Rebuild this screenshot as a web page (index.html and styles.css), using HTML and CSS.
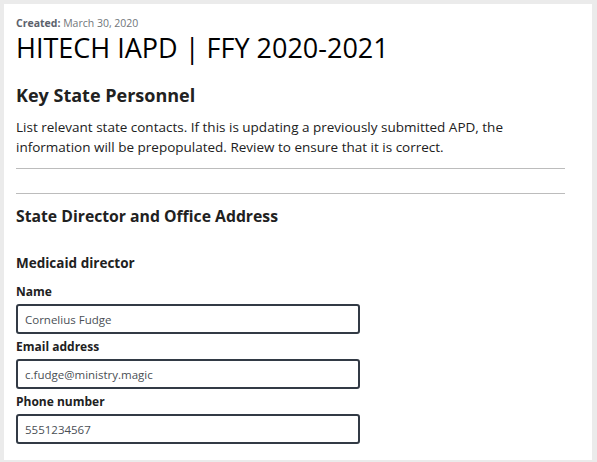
FILE: index.html
```html
<!DOCTYPE html>
<html lang="en">
<head>
<meta charset="utf-8">
<title>HITECH IAPD</title>
<link rel="stylesheet" href="styles.css">
</head>
<body>
<main class="card">
  <div class="created"><strong>Created:</strong> March 30, 2020</div>
  <h1 class="title">HITECH IAPD | FFY 2020-2021</h1>
  <h2 class="section-title">Key State Personnel</h2>
  <p class="intro">List relevant state contacts. If this is updating a previously submitted APD, the information will be prepopulated. Review to ensure that it is correct.</p>
  <hr class="rule">
  <hr class="rule rule-second">
  <h3 class="subsection-title">State Director and Office Address</h3>
  <h4 class="group-title">Medicaid director</h4>
  <div class="field">
    <label class="field-label" for="name">Name</label>
    <input class="field-input" id="name" type="text" value="Cornelius Fudge">
  </div>
  <div class="field">
    <label class="field-label" for="email">Email address</label>
    <input class="field-input" id="email" type="text" value="c.fudge@ministry.magic">
  </div>
  <div class="field">
    <label class="field-label" for="phone">Phone number</label>
    <input class="field-input" id="phone" type="text" value="5551234567">
  </div>
</main>
</body>
</html>
```

FILE: styles.css
```css
* { box-sizing: border-box; }
html, body { margin: 0; padding: 0; }
body {
  background: #ebebeb;
  font-family: "Open Sans", "Liberation Sans", sans-serif;
  color: #212121;
  padding: 4px 5px 3px 4px;
}
.card {
  background: #ffffff;
  padding: 12px 27px 16px 12px;
  min-height: 455px;
}
.created {
  font-size: 10.5px;
  line-height: 15px;
  color: #71767a;
}
.created strong { font-weight: 700; color: #5b616b; }
.title {
  margin: 0;
  font-size: 27px;
  font-weight: 400;
  line-height: 34px;
  color: #000;
}
.section-title {
  margin: 18px 0 0;
  font-size: 18px;
  font-weight: 700;
  line-height: 24px;
}
.intro {
  margin: 11px 0 0;
  font-size: 13.5px;
  line-height: 19.5px;
}
.rule {
  border: 0;
  border-top: 1px solid #bcbcbc;
  margin: 11px 0 0;
}
.rule-second { margin-top: 24px; }
.subsection-title {
  margin: 11px 0 0;
  font-size: 15.75px;
  font-weight: 700;
  line-height: 22px;
}
.group-title {
  margin: 26px 0 11px;
  font-size: 13.5px;
  font-weight: 700;
  line-height: 20px;
}
.field { display: flex; flex-direction: column; margin-top: 5px; }
.field:first-of-type { margin-top: 0; }
.field-label {
  font-size: 12px;
  font-weight: 700;
  line-height: 16px;
  margin-bottom: 4px;
}
.field-input {
  width: 344px;
  height: 30px;
  border: 2px solid #323a45;
  border-radius: 3px;
  padding: 0 7px;
  font-family: inherit;
  font-size: 11.5px;
  color: #4a4f55;
  background: #fff;
}
```
